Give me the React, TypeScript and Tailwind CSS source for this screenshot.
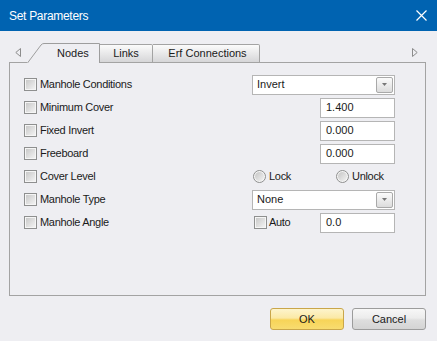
import React from "react";

const labelCls = "text-[11px] tracking-[-0.3px] text-[#1a1a1a] leading-none";

function CheckBox() {
  return (
    <div className="h-[13px] w-[13px] shrink-0 border border-[#8e8f8f] bg-[#f5f5f5] p-[1px]">
      <div className="h-full w-full bg-linear-to-br from-[#c9c9c9] to-[#f2f2f2]" />
    </div>
  );
}

function Radio() {
  return (
    <div className="h-[13px] w-[13px] shrink-0 rounded-full border border-[#8e8f8f] bg-[#f5f5f5] p-[1px]">
      <div className="h-full w-full rounded-full bg-linear-to-br from-[#c6c6c6] to-[#f2f2f2]" />
    </div>
  );
}

function TextBox({ value }: { value: string }) {
  return (
    <div className="flex h-[20px] w-[75px] items-center border border-[#b5b5b5] bg-white pl-[5px] text-[11px] leading-none text-[#1a1a1a]">
      {value}
    </div>
  );
}

function Combo({ value }: { value: string }) {
  return (
    <div className="flex h-[20px] w-[143px] items-center justify-between border border-[#b5b5b5] bg-white pl-[4px] pr-[1px] text-[11px] leading-none text-[#1a1a1a]">
      <span>{value}</span>
      <div className="flex h-[16px] w-[17px] items-center justify-center rounded-[2px] border border-[#a9a9a9] bg-linear-to-b from-[#fbfbfb] to-[#dcdcdc]">
        <svg width="5" height="3" viewBox="0 0 5 3">
          <path d="M0 0h5L2.5 3z" fill="#777" />
        </svg>
      </div>
    </div>
  );
}

type Row = { label: string; right: React.ReactNode };

const rows: Row[] = [
  { label: "Manhole Conditions", right: <Combo value="Invert" /> },
  { label: "Minimum Cover", right: <TextBox value="1.400" /> },
  { label: "Fixed Invert", right: <TextBox value="0.000" /> },
  { label: "Freeboard", right: <TextBox value="0.000" /> },
  {
    label: "Cover Level",
    right: (
      <div className="flex w-full items-center">
        <div className="flex w-[84px] items-center pl-[1px]">
          <Radio />
          <span className={labelCls + " ml-[3px]"}>Lock</span>
        </div>
        <div className="flex items-center">
          <Radio />
          <span className={labelCls + " ml-[3px]"}>Unlock</span>
        </div>
      </div>
    ),
  },
  { label: "Manhole Type", right: <Combo value="None" /> },
  {
    label: "Manhole Angle",
    right: (
      <div className="flex w-full items-center justify-between">
        <div className="flex items-center pl-[2px]">
          <CheckBox />
          <span className={labelCls + " ml-[2px]"}>Auto</span>
        </div>
        <TextBox value="0.0" />
      </div>
    ),
  },
];

function Arrow({ dir }: { dir: "l" | "r" }) {
  return (
    <svg width="6" height="9" viewBox="0 0 6 9">
      <path
        d={dir === "l" ? "M5.5 0.5 L0.8 4.5 L5.5 8.5 Z" : "M0.5 0.5 L5.2 4.5 L0.5 8.5 Z"}
        fill="none"
        stroke="#8c8c8c"
        strokeWidth="1"
      />
    </svg>
  );
}

export default function App() {
  return (
    <div className="h-[341px] w-[437px] overflow-hidden bg-[#eeeef2] font-['Liberation_Sans',Arial,sans-serif]">
      {/* title bar */}
      <div className="flex h-[31px] items-center justify-between bg-[#0063b1] pl-[9px] pr-[10px]">
        <span className="text-[12px] tracking-[-0.3px] text-white">Set Parameters</span>
        <svg width="11" height="11" viewBox="0 0 11 11">
          <path d="M0.5 0.5 L10.5 10.5 M10.5 0.5 L0.5 10.5" stroke="white" strokeWidth="1.2" />
        </svg>
      </div>

      <div className="ml-[9px] mt-[12px] w-[417px]">
        {/* tabs */}
        <div className="flex h-[20px] items-end">
          <div className="flex h-full w-[18px] items-center border-b border-[#a3a3a3] pl-[6px]">
            <Arrow dir="l" />
          </div>
          <div className="relative h-[20px] w-[73px]">
            <svg className="absolute inset-0" width="73" height="20" viewBox="0 0 73 20">
              <path d="M0.5 20 L14 2 Q15.2 0.5 17 0.5 L72.5 0.5 L72.5 20" fill="#eeeef2" stroke="#9d9d9d" />
            </svg>
            <div className="relative flex h-full items-center pl-[30px] text-[11px] leading-none text-[#1a1a1a]">Nodes</div>
          </div>
          <div className="flex h-[19px] w-[53px] items-center justify-center rounded-tr-[2px] border-y border-r border-[#a3a3a3] bg-linear-to-b from-[#fbfbfb] to-[#d6d6d8] text-[11px] leading-none text-[#1a1a1a]">
            Links
          </div>
          <div className="flex h-[19px] w-[107px] items-center justify-center rounded-tr-[2px] border-y border-r border-[#a3a3a3] bg-linear-to-b from-[#fbfbfb] to-[#d6d6d8] pl-[3px] text-[11px] leading-none text-[#1a1a1a]">
            Erf Connections
          </div>
          <div className="flex h-full flex-1 items-center justify-end border-b border-[#a3a3a3] pr-[8px]">
            <Arrow dir="r" />
          </div>
        </div>

        {/* panel */}
        <div className="h-[233px] border-x border-b border-[#a3a3a3] pt-[10px]">
          {rows.map((r) => (
            <div key={r.label} className="flex h-[23px] items-center">
              <div className="flex w-[242px] items-center pl-[14px]">
                <CheckBox />
                <span className={labelCls + " ml-[3px]"}>{r.label}</span>
              </div>
              <div className="flex w-[143px] items-center justify-end">{r.right}</div>
            </div>
          ))}
        </div>

        {/* buttons */}
        <div className="mt-[12px] flex justify-end gap-[8px]">
          <button className="h-[22px] w-[74px] rounded-[3px] border border-[#c9a64a] bg-[linear-gradient(to_bottom,#fdf4cc_0%,#fbe9a6_45%,#f7d458_55%,#f8dc70_100%)] text-[11px] text-[#1a1a1a]">
            OK
          </button>
          <button className="h-[22px] w-[74px] rounded-[3px] border border-[#9c9c9c] bg-[linear-gradient(to_bottom,#f7f7f7_0%,#ececec_45%,#dedede_55%,#d4d4d4_100%)] text-[11px] text-[#1a1a1a]">
            Cancel
          </button>
        </div>
      </div>
    </div>
  );
}
